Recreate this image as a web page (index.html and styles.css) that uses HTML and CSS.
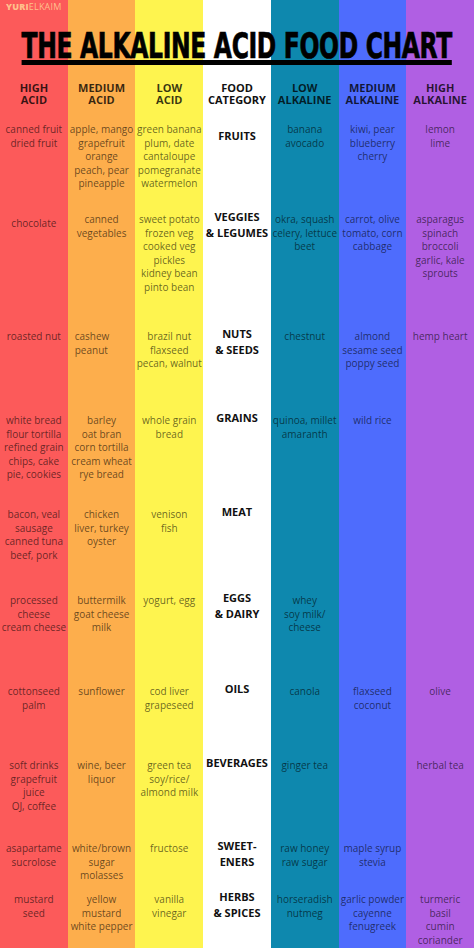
FILE: index.html
```html
<!DOCTYPE html>
<html lang="en">
<head>
    <meta charset="UTF-8">
    <meta name="viewport" content="width=device-width, initial-scale=1.0">
    <title>The Alkaline Acid Food Chart</title>
    <link rel="stylesheet" href="styles.css">
</head>
<body>
    <div class="chart">
        <div class="brand"><b>YURI</b>ELKAIM</div>
        <h1 class="title"><span>THE ALKALINE ACID FOOD CHART</span></h1>

        <div class="grid">
            <!-- column headings -->
            <div class="head">HIGH<br>ACID</div>
            <div class="head">MEDIUM<br>ACID</div>
            <div class="head">LOW<br>ACID</div>
            <div class="head cat-head">FOOD<br>CATEGORY</div>
            <div class="head">LOW<br>ALKALINE</div>
            <div class="head">MEDIUM<br>ALKALINE</div>
            <div class="head">HIGH<br>ALKALINE</div>

            <!-- fruits -->
            <div class="cell">canned fruit<br>dried fruit</div>
            <div class="cell">apple, mango<br>grapefruit<br>orange<br>peach, pear<br>pineapple</div>
            <div class="cell">green banana<br>plum, date<br>cantaloupe<br>pomegranate<br>watermelon</div>
            <div class="cat low">FRUITS</div>
            <div class="cell">banana<br>avocado</div>
            <div class="cell">kiwi, pear<br>blueberry<br>cherry</div>
            <div class="cell">lemon<br>lime</div>

            <!-- veggies -->
            <div class="cell drop">chocolate</div>
            <div class="cell">canned<br>vegetables</div>
            <div class="cell">sweet potato<br>frozen veg<br>cooked veg<br>pickles<br>kidney bean<br>pinto bean</div>
            <div class="cat">VEGGIES<br>&amp; LEGUMES</div>
            <div class="cell">okra, squash<br>celery, lettuce<br>beet</div>
            <div class="cell">carrot, olive<br>tomato, corn<br>cabbage</div>
            <div class="cell">asparagus<br>spinach<br>broccoli<br>garlic, kale<br>sprouts</div>

            <!-- nuts -->
            <div class="cell">roasted nut</div>
            <div class="cell left">cashew<br>peanut</div>
            <div class="cell">brazil nut<br>flaxseed<br>pecan, walnut</div>
            <div class="cat">NUTS<br>&amp; SEEDS</div>
            <div class="cell">chestnut</div>
            <div class="cell">almond<br>sesame seed<br>poppy seed</div>
            <div class="cell">hemp heart</div>

            <!-- grains -->
            <div class="cell">white bread<br>flour tortilla<br>refined grain<br>chips, cake<br>pie, cookies</div>
            <div class="cell">barley<br>oat bran<br>corn tortilla<br>cream wheat<br>rye bread</div>
            <div class="cell">whole grain<br>bread</div>
            <div class="cat">GRAINS</div>
            <div class="cell">quinoa, millet<br>amaranth</div>
            <div class="cell">wild rice</div>
            <div class="cell"></div>

            <!-- meat -->
            <div class="cell">bacon, veal<br>sausage<br>canned tuna<br>beef, pork</div>
            <div class="cell">chicken<br>liver, turkey<br>oyster</div>
            <div class="cell">venison<br>fish</div>
            <div class="cat">MEAT</div>
            <div class="cell"></div>
            <div class="cell"></div>
            <div class="cell"></div>

            <!-- eggs -->
            <div class="cell">processed<br>cheese<br>cream cheese</div>
            <div class="cell">buttermilk<br>goat cheese<br>milk</div>
            <div class="cell">yogurt, egg</div>
            <div class="cat">EGGS<br>&amp; DAIRY</div>
            <div class="cell">whey<br>soy milk/<br>cheese</div>
            <div class="cell"></div>
            <div class="cell"></div>

            <!-- oils -->
            <div class="cell">cottonseed<br>palm</div>
            <div class="cell">sunflower</div>
            <div class="cell">cod liver<br>grapeseed</div>
            <div class="cat">OILS</div>
            <div class="cell">canola</div>
            <div class="cell">flaxseed<br>coconut</div>
            <div class="cell">olive</div>

            <!-- beverages -->
            <div class="cell">soft drinks<br>grapefruit<br>juice<br>OJ, coffee</div>
            <div class="cell">wine, beer<br>liquor</div>
            <div class="cell">green tea<br>soy/rice/<br>almond milk</div>
            <div class="cat">BEVERAGES</div>
            <div class="cell">ginger tea</div>
            <div class="cell"></div>
            <div class="cell">herbal tea</div>

            <!-- sweeteners -->
            <div class="cell">asapartame<br>sucrolose</div>
            <div class="cell">white/brown<br>sugar<br>molasses</div>
            <div class="cell">fructose</div>
            <div class="cat">SWEET-<br>ENERS</div>
            <div class="cell">raw honey<br>raw sugar</div>
            <div class="cell">maple syrup<br>stevia</div>
            <div class="cell"></div>

            <!-- herbs -->
            <div class="cell">mustard<br>seed</div>
            <div class="cell">yellow<br>mustard<br>white pepper</div>
            <div class="cell">vanilla<br>vinegar</div>
            <div class="cat">HERBS<br>&amp; SPICES</div>
            <div class="cell">horseradish<br>nutmeg</div>
            <div class="cell">garlic powder<br>cayenne<br>fenugreek</div>
            <div class="cell">turmeric<br>basil<br>cumin<br>coriander</div>
        </div>
    </div>
</body>
</html>
```

FILE: styles.css
```css
body {
    margin: 0;
    padding: 0;
    font-family: "Open Sans", "DejaVu Sans", sans-serif;
    overflow: hidden;
}
.chart {
    width: 474px;
    height: 948px;
    overflow: hidden;
    background: linear-gradient(to right,
        #fc5a5a 0 14.2857%,
        #fdae4c 14.2857% 28.5714%,
        #fef44f 28.5714% 42.8571%,
        #ffffff 42.8571% 57.1428%,
        #0e88ae 57.1428% 71.4285%,
        #4e6cfd 71.4285% 85.7142%,
        #b05fe3 85.7142% 100%);
}
.brand {
    padding: 1px 0 0 6px;
    height: 12px;
    font-size: 9px;
    line-height: 12px;
    letter-spacing: 0.2px;
    color: rgba(255, 212, 150, 0.85);
}
.brand b {
    font-weight: 800;
}
.title {
    margin: 12px 0 0;
    height: 42px;
    display: flex;
    justify-content: center;
    font-family: "DejaVu Sans", sans-serif;
    font-weight: bold;
    font-stretch: condensed;
    font-size: 36px;
    line-height: 42px;
    color: #000;
    white-space: nowrap;
}
.title span {
    display: inline-block;
    transform: scaleX(0.725);
    letter-spacing: -0.5px;
    -webkit-text-stroke: 0.7px #000;
    text-decoration: underline;
    text-decoration-thickness: 5px;
    text-underline-offset: 2px;
    text-decoration-skip-ink: none;
}
.grid {
    margin-top: 15px;
    display: grid;
    grid-template-columns: repeat(7, 1fr);
    grid-template-rows: 41px 90px 117px 84px 94px 86px 91px 74px 83px 51px 1fr;
    height: 851px;
}
.head {
    text-align: center;
    font-weight: bold;
    font-size: 11px;
    line-height: 11.5px;
    color: rgba(0, 0, 0, 0.78);
}
.cat-head {
    color: #111;
}
.cell {
    text-align: center;
    font-size: 10px;
    line-height: 13.6px;
    color: rgba(0, 0, 0, 0.6);
    white-space: nowrap;
}
.cell.drop {
    padding-top: 4px;
}
.cell.left {
    text-align: left;
    padding-left: 7px;
}
.cat {
    margin-top: -4px;
    text-align: center;
    font-weight: bold;
    font-size: 11px;
    line-height: 16px;
    color: #111;
    white-space: nowrap;
}
.cat.low {
    margin-top: 5px;
}
```
